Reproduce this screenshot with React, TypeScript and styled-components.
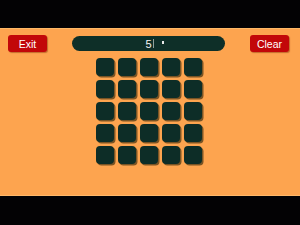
import React from 'react';
import styled, { createGlobalStyle } from 'styled-components';

const GlobalStyle = createGlobalStyle`
  html, body {
    margin: 0;
    padding: 0;
    background: #030204;
    font-family: 'Liberation Sans', Arial, sans-serif;
  }
`;

const Screen = styled.div`
  width: 300px;
  height: 225px;
  display: flex;
  flex-direction: column;
  background: #030204;
`;

const Letterbox = styled.div<{ $h: number }>`
  height: ${(p) => p.$h}px;
  flex-shrink: 0;
`;

const Board = styled.div`
  height: 168px;
  background: #fda44f;
  box-shadow: inset 0 1px 0 #ffb866, inset 0 -1px 0 #ffb86a;
  display: flex;
  flex-direction: column;
  align-items: stretch;
  padding-top: 7px;
  box-sizing: border-box;
`;

const Header = styled.div`
  display: flex;
  align-items: center;
  gap: 25px;
  padding: 0 11px 0 8px;
  height: 17px;
`;

const RedButton = styled.button`
  width: 39px;
  height: 17px;
  border: none;
  border-radius: 3px;
  background: #c20709;
  color: #ffffff;
  font-family: 'Liberation Sans', Arial, sans-serif;
  font-size: 10.5px;
  padding: 0;
  box-shadow: 1px 1px 1px rgba(120, 40, 0, 0.45);
  cursor: pointer;
`;

const Display = styled.div`
  flex: 1;
  height: 15px;
  border-radius: 8px;
  background: #0e2f28;
  color: #f4f4f4;
  font-size: 11px;
  display: flex;
  align-items: center;
  justify-content: center;
  position: relative;
  padding-left: 2px;
`;

const Caret = styled.span`
  display: inline-block;
  width: 1px;
  height: 9px;
  margin-left: 1px;
  background: #8fa09a;
`;

const Pointer = styled.span`
  position: absolute;
  left: 90px;
  top: 5px;
  width: 2px;
  height: 3px;
  background: #e8e8e8;
`;

const Grid = styled.div`
  margin: 6px auto 0;
  display: grid;
  grid-template-columns: repeat(5, 18px);
  grid-auto-rows: 18px;
  gap: 4px;
  transform: translateX(-1px);
`;

const Tile = styled.div`
  background: #0d2d27;
  border-radius: 4px;
  box-shadow: 1.5px 1.5px 0.5px #7a5424;
`;

export default function App() {
  return (
    <>
      <GlobalStyle />
      <Screen>
        <Letterbox $h={28} />
        <Board>
          <Header>
            <RedButton>Exit</RedButton>
            <Display>
              5<Caret />
              <Pointer />
            </Display>
            <RedButton>Clear</RedButton>
          </Header>
          <Grid>
            {Array.from({ length: 25 }).map((_, i) => (
              <Tile key={i} />
            ))}
          </Grid>
        </Board>
        <Letterbox $h={29} />
      </Screen>
    </>
  );
}
